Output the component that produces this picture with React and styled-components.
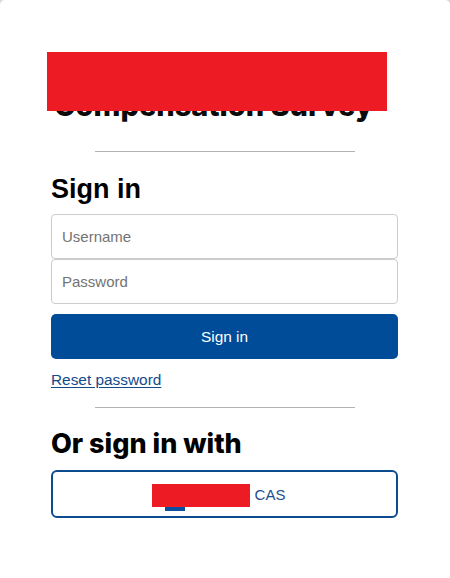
import React from "react";
import styled, { createGlobalStyle } from "styled-components";

const GlobalStyle = createGlobalStyle`
  html, body {
    margin: 0;
    padding: 0;
    background: #d9d9d9;
  }
  body {
    font-family: "Liberation Sans", Arial, sans-serif;
  }
  * {
    box-sizing: border-box;
  }
`;

const Card = styled.main`
  width: 450px;
  min-height: 578px;
  background: #ffffff;
  border-radius: 5px 5px 0 0;
  padding: 88px 52px 0 51px;
  display: flex;
  flex-direction: column;
`;

const TitleWrap = styled.div`
  position: relative;
`;

const Title = styled.h1`
  margin: 0;
  padding-left: 3px;
  font-family: Inter, "Noto Sans", sans-serif;
  font-weight: 800;
  font-size: 29px;
  line-height: 36px;
  color: #0b0b0b;
  white-space: nowrap;
`;

// redaction block laid over the title in the screenshot
const Redaction = styled.div`
  position: absolute;
  top: ${(p) => p.$top}px;
  left: ${(p) => p.$left}px;
  width: ${(p) => p.$w}px;
  height: ${(p) => p.$h}px;
  background: #ed1c24;
`;

const Divider = styled.hr`
  width: 260px;
  height: 1px;
  border: 0;
  background: #b3b3b3;
  margin: ${(p) => p.$top}px auto 0 auto;
`;

const Heading = styled.h2`
  margin: ${(p) => p.$top}px 0 0 0;
  font-family: ${(p) =>
    p.$geo ? 'Inter, "Noto Sans", sans-serif' : '"Liberation Sans", Arial, sans-serif'};
  font-weight: ${(p) => (p.$geo ? 800 : 700)};
  font-size: 27px;
  line-height: 32px;
  color: #000;
`;

const Fields = styled.div`
  margin-top: 9px;
  display: flex;
  flex-direction: column;
`;

const Input = styled.input`
  width: 100%;
  height: 45px;
  border: 1px solid #cccccc;
  border-radius: 4px;
  padding: 0 10px;
  font-family: "Liberation Sans", Arial, sans-serif;
  font-size: 15px;
  color: #333;
  background: #fff;
  outline: none;

  &::placeholder {
    color: #737373;
  }
`;

const PrimaryButton = styled.button`
  margin-top: 10px;
  width: 100%;
  height: 45px;
  border: 0;
  border-radius: 5px;
  background: #004c99;
  color: #ffffff;
  font-family: "Liberation Sans", Arial, sans-serif;
  font-size: 15.4px;
  cursor: pointer;
`;

const ResetLink = styled.a`
  margin-top: 11px;
  align-self: flex-start;
  font-size: 15.4px;
  line-height: 20px;
  color: #124a8a;
  text-decoration: underline;
  text-underline-offset: 2px;
`;

const CasButton = styled.button`
  margin-top: 10px;
  width: 100%;
  height: 48px;
  border: 2px solid #0d4b90;
  border-radius: 6px;
  background: #fff;
  display: flex;
  align-items: center;
  justify-content: center;
  padding: 0 12px 0 0;
  cursor: pointer;
`;

const Logo = styled.div`
  position: relative;
  width: 98px;
  height: 27px;
  margin-top: 6px;
`;

const LogoBar = styled.div`
  position: absolute;
  left: 13px;
  bottom: 0;
  width: 20px;
  height: 4px;
  background: #0b4fa0;
`;

const CasLabel = styled.span`
  margin-left: 5px;
  font-family: "Liberation Sans", Arial, sans-serif;
  font-size: 15px;
  color: #1d4f8e;
`;

export default function App() {
  return (
    <>
      <GlobalStyle />
      <Card>
        <TitleWrap>
          <Title>Compensation Survey</Title>
          <Redaction $top={-36} $left={-4} $w={340} $h={59} />
        </TitleWrap>

        <Divider $top={27} />

        <Heading $top={21}>Sign in</Heading>

        <Fields>
          <Input type="text" placeholder="Username" />
          <Input type="password" placeholder="Password" />
        </Fields>

        <PrimaryButton>Sign in</PrimaryButton>

        <ResetLink href="#">Reset password</ResetLink>

        <Divider $top={17} />

        <Heading $top={20} $geo>
          Or sign in with
        </Heading>

        <CasButton>
          <Logo>
            <LogoBar />
            <Redaction $top={0} $left={0} $w={98} $h={23} />
          </Logo>
          <CasLabel>CAS</CasLabel>
        </CasButton>
      </Card>
    </>
  );
}
